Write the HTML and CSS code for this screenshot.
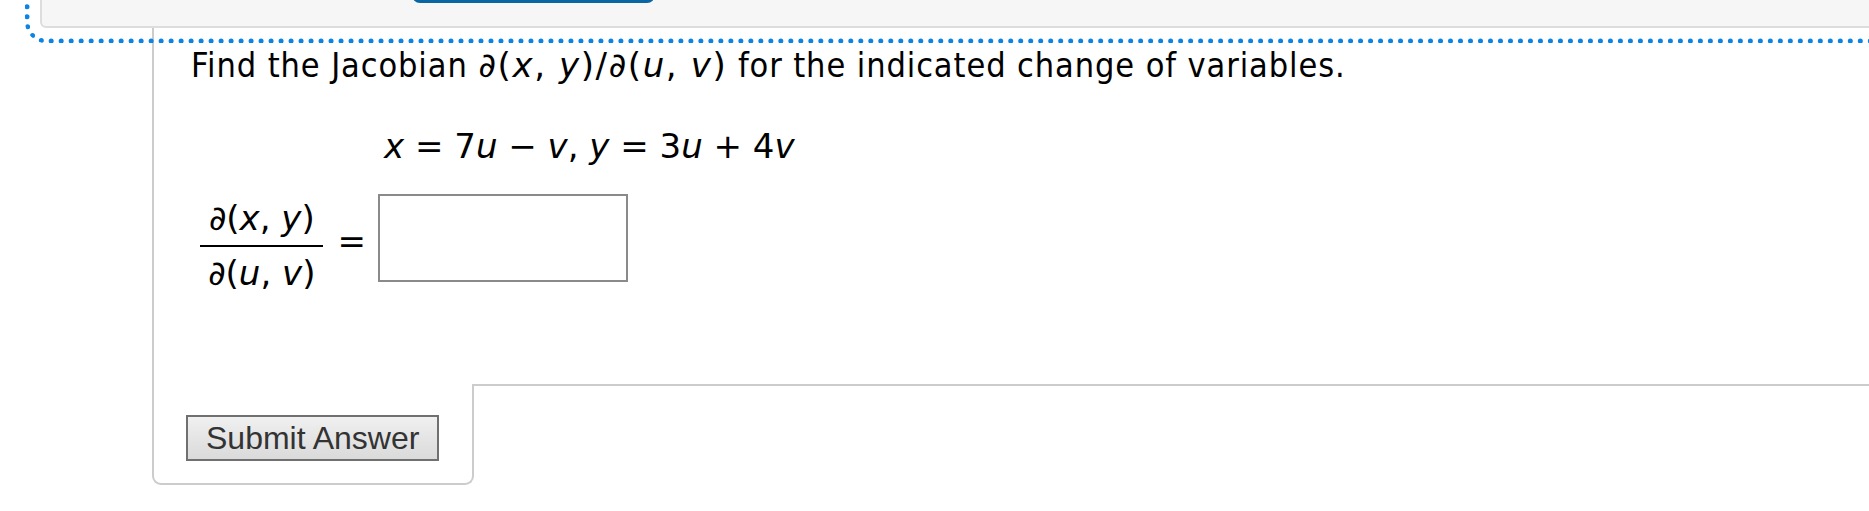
FILE: index.html
```html
<!DOCTYPE html>
<html lang="en">
<head>
<meta charset="utf-8">
<title>Jacobian question</title>
<link rel="stylesheet" href="styles.css">
</head>
<body>
<div class="toolbar">
  <div class="toolbar-btn"></div>
</div>
<div class="card">
  <div class="card-body">
    <p class="question">Find the Jacobian <span class="m inline"><i>∂</i>(<i>x</i>, <i>y</i>)/<i>∂</i>(<i>u</i>, <i>v</i>)</span> for the indicated change of variables.</p>
    <p class="equation m"><i>x</i> = 7<i>u</i> − <i>v</i>, <i>y</i> = 3<i>u</i> + 4<i>v</i></p>
    <div class="answer-row">
      <span class="frac m">
        <span class="num"><i>∂</i>(<i>x</i>, <i>y</i>)</span>
        <span class="bar"></span>
        <span class="den"><i>∂</i>(<i>u</i>, <i>v</i>)</span>
      </span>
      <span class="eq m">=</span>
      <input class="answer" type="text" aria-label="answer">
    </div>
  </div>
  <div class="card-footer">
    <div class="footer-left">
      <button class="submit" type="button">Submit Answer</button>
    </div>
    <div class="footer-rest"></div>
  </div>
</div>
</body>
</html>
```

FILE: styles.css
```css
html, body {
  margin: 0;
  padding: 0;
  overflow: hidden;
  background: #ffffff;
}

body {
  font-family: "DejaVu Sans Condensed", "DejaVu Sans", sans-serif;
  color: #000;
}

.m {
  font-family: "DejaVu Sans", sans-serif;
}

.m.inline {
  letter-spacing: 1.6px;
}

.toolbar {
  margin: -14px -60px 0 40px;
  height: 38px;
  background: #f6f6f6;
  border: 2px solid #dddddd;
  border-radius: 6px;
  outline: 5px dotted #0b84e6;
  outline-offset: 10px;
  display: flex;
  align-items: flex-start;
  padding-left: 370px;
}

.toolbar-btn {
  width: 243px;
  height: 15px;
  background: #0a66a2;
  border-radius: 0 0 8px 8px;
}

.card {
  margin-left: 152px;
}

.card-body {
  border-left: 2px solid #cccccc;
  padding: 17px 0 91px 37px;
}

.question {
  margin: 0;
  font-size: 34px;
  line-height: 40px;
  letter-spacing: 0.9px;
}

.equation {
  margin: 41px 0 0 193px;
  font-size: 34px;
  line-height: 40px;
}

.answer-row {
  margin-top: 28px;
  display: flex;
  align-items: flex-start;
}

.frac {
  display: inline-flex;
  flex-direction: column;
  align-items: center;
  margin: 4px 0 0 17px;
  font-size: 34px;
  line-height: 40px;
}

.bar {
  align-self: stretch;
  height: 2px;
  background: #000;
  margin: 7px -8px 6px;
}

.eq {
  font-size: 34px;
  line-height: 40px;
  margin: 27px 12px 0 22px;
}

.answer {
  width: 246px;
  height: 84px;
  box-sizing: content-box;
  padding: 0;
  margin: 0;
  border: 2px solid #8a8a8a;
  background: #fff;
}

.card-footer {
  display: flex;
}

.footer-left {
  border: 2px solid #cccccc;
  border-top: none;
  border-radius: 0 0 9px 9px;
  padding: 31px 0 22px 32px;
  box-sizing: border-box;
  width: 322px;
}

.footer-rest {
  flex: 1;
  border-top: 2px solid #cccccc;
}

.submit {
  display: block;
  margin: 0;
  height: 46px;
  padding: 0 18px;
  font-family: "Liberation Sans", Arial, sans-serif;
  font-size: 32px;
  color: #333;
  background: linear-gradient(#f0f0f0, #dadada);
  border: 2px solid #707070;
  border-radius: 0;
}
```
